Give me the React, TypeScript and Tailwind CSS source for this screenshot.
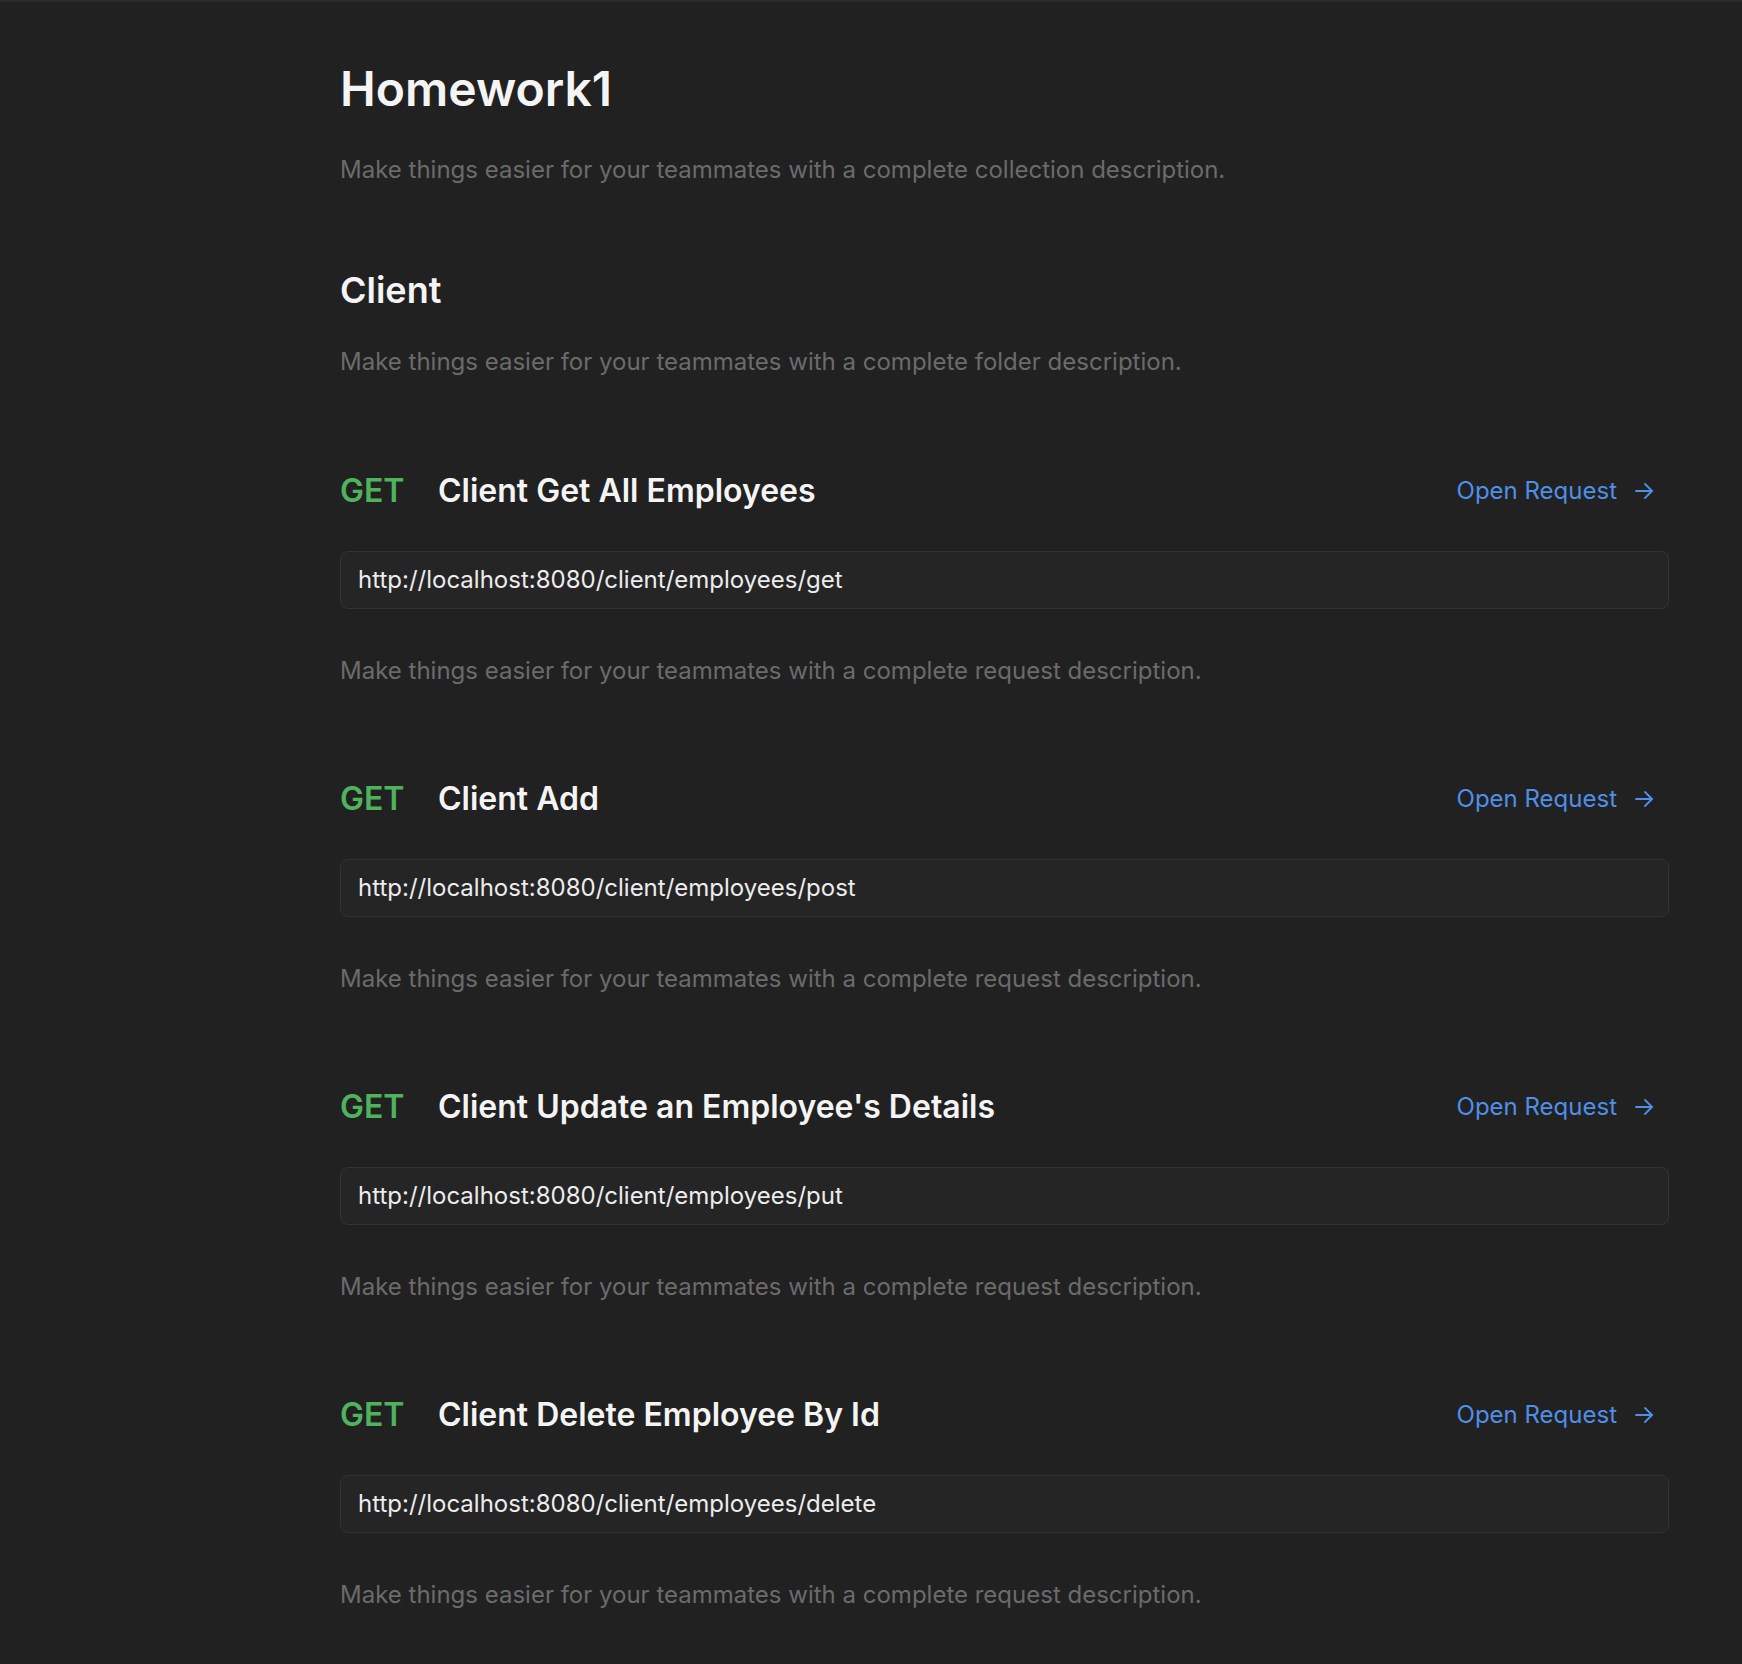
import React from 'react';

const requests = [
  { method: 'GET', name: 'Client Get All Employees', url: 'http://localhost:8080/client/employees/get' },
  { method: 'GET', name: 'Client Add', url: 'http://localhost:8080/client/employees/post' },
  { method: 'GET', name: "Client Update an Employee's Details", url: 'http://localhost:8080/client/employees/put' },
  { method: 'GET', name: 'Client Delete Employee By Id', url: 'http://localhost:8080/client/employees/delete' },
];

function ArrowIcon() {
  return (
    <svg width="18" height="16" viewBox="0 0 18 16" fill="none" stroke="currentColor" strokeWidth="1.8" strokeLinecap="round" strokeLinejoin="round">
      <path d="M1 8h16" />
      <path d="M10 1l7 7-7 7" />
    </svg>
  );
}

function RequestBlock({ method, name, url, first }: { method: string; name: string; url: string; first: boolean }) {
  return (
    <div className={first ? 'mt-[93px]' : 'mt-[92px]'}>
      <div className="flex items-center h-[40px]">
        <span className="w-[98px] shrink-0 text-[32px] leading-[40px] font-semibold text-[#4fb35e]">{method}</span>
        <h3 className="flex-1 text-[32px] leading-[40px] font-semibold text-[#f4f4f4]">{name}</h3>
        <a href="#" className="flex items-center gap-[18px] pr-[16px] text-[24px] leading-[32px] text-[#4f8fe8]">
          Open Request
          <ArrowIcon />
        </a>
      </div>
      <div className="mt-[40px] h-[58px] flex items-center rounded-[8px] border border-[#333333] bg-[#252525] px-[17px] text-[24px] leading-[32px] text-[#ececec]">
        {url}
      </div>
      <p className="mt-[46px] text-[24px] leading-[32px] text-[#6b6b6b]">
        Make things easier for your teammates with a complete request description.
      </p>
    </div>
  );
}

export default function App() {
  return (
    <div className="min-h-screen bg-[#212121] font-['Inter',sans-serif]">
      <div className="h-[2px] bg-[#2c2c2c]" />
      <div className="ml-[340px] w-[1329px] pt-[59px] pb-[60px]">
        <h1 className="text-[48px] leading-[56px] font-semibold text-[#f4f4f4]">Homework1</h1>
        <p className="mt-[37px] text-[24px] leading-[32px] text-[#6b6b6b]">
          Make things easier for your teammates with a complete collection description.
        </p>
        <h2 className="mt-[82px] text-[36px] leading-[44px] font-semibold text-[#f4f4f4]">Client</h2>
        <p className="mt-[34px] text-[24px] leading-[32px] text-[#6b6b6b]">
          Make things easier for your teammates with a complete folder description.
        </p>
        {requests.map((r, i) => (
          <RequestBlock key={r.name} first={i === 0} {...r} />
        ))}
      </div>
    </div>
  );
}
